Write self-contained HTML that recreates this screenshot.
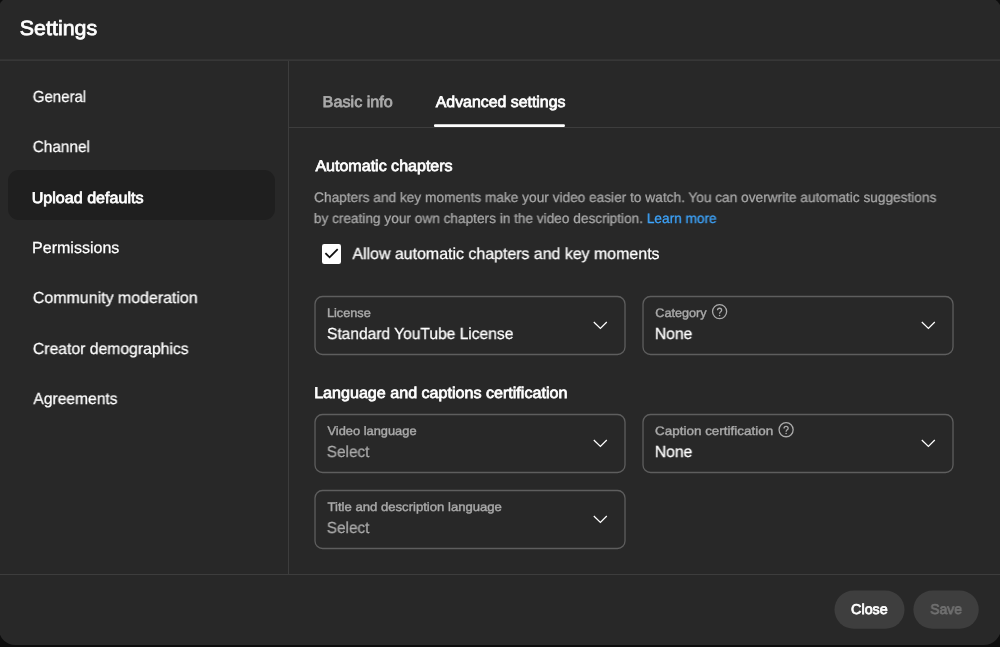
<!DOCTYPE html>
<html><head><meta charset="utf-8"><style>
html,body{margin:0;padding:0;width:1000px;height:647px;overflow:hidden;background:#0d0d0d;}
body{position:relative;font-family:"Liberation Sans",sans-serif;text-rendering:geometricPrecision;}
.dlg{position:absolute;left:-1.5px;top:-2.5px;width:1002.5px;height:647.7px;background:#282828;border-radius:10px 12px 17px 16px;}
.t{position:absolute;white-space:nowrap;line-height:1;transform-origin:0 0;will-change:transform;}
.lk{color:#3ea6ff;-webkit-text-stroke-color:#3ea6ff;}
.hl{position:absolute;left:0;top:0;width:1000px;height:1px;background:#3d3d3d;}
.sel{position:absolute;left:7.8px;top:170px;width:267.4px;height:50px;background:#1f1f1f;border-radius:11px;}
.box{position:absolute;width:310px;height:57px;border:1px solid #5a5a5a;border-radius:8px;}
.btn{position:absolute;top:590.2px;height:38px;border-radius:19px;background:#3e3e3e;}
svg{position:absolute;left:0;top:0;}
</style></head><body>
<div class="dlg"></div>

<div class="hl" style="top:574px"></div>
<div style="position:absolute;left:288px;top:61px;width:1px;height:513px;background:#3d3d3d"></div>
<div style="position:absolute;left:289px;top:127px;width:711px;height:1px;background:#3d3d3d"></div>

<div class="sel"></div>



<div style="position:absolute;left:321.9px;top:244.3px;width:19px;height:19.5px;background:#fff;border-radius:2.2px"></div>
<svg width="1000" height="647" viewBox="0 0 1000 647">
<line x1="0" y1="60.1" x2="1000" y2="60.1" stroke="#3d3d3d" stroke-width="1.1"/>
<polyline points="325.4,253.2 329.6,257.3 337.7,249.2" fill="none" stroke="#0f0f0f" stroke-width="1.8"/>
<rect x="434" y="124.3" width="130.9" height="2.75" rx="1" fill="#fff"/>
<rect x="834.5" y="590.5" width="70" height="38.3" rx="19.15" fill="#3e3e3e"/>
<rect x="913.4" y="590.5" width="65.35" height="38.3" rx="19.15" fill="#3e3e3e"/>
<path d="M322.5,296.5 H617.5 A7.5,7.5 0 0 1 625,304.0 V347.0 A7.5,7.5 0 0 1 617.5,354.5 H322.5 A7.5,7.5 0 0 1 315,347.0 V304.0 A7.5,7.5 0 0 1 322.5,296.5 Z" fill="none" stroke="#5e5e5e" stroke-width="1.3"/><path d="M650.5,296.5 H945.5 A7.5,7.5 0 0 1 953,304.0 V347.0 A7.5,7.5 0 0 1 945.5,354.5 H650.5 A7.5,7.5 0 0 1 643,347.0 V304.0 A7.5,7.5 0 0 1 650.5,296.5 Z" fill="none" stroke="#5e5e5e" stroke-width="1.3"/><path d="M322.5,414.5 H617.5 A7.5,7.5 0 0 1 625,422.0 V465.0 A7.5,7.5 0 0 1 617.5,472.5 H322.5 A7.5,7.5 0 0 1 315,465.0 V422.0 A7.5,7.5 0 0 1 322.5,414.5 Z" fill="none" stroke="#5e5e5e" stroke-width="1.3"/><path d="M650.5,414.5 H945.5 A7.5,7.5 0 0 1 953,422.0 V465.0 A7.5,7.5 0 0 1 945.5,472.5 H650.5 A7.5,7.5 0 0 1 643,465.0 V422.0 A7.5,7.5 0 0 1 650.5,414.5 Z" fill="none" stroke="#5e5e5e" stroke-width="1.3"/><path d="M322.5,490.5 H617.5 A7.5,7.5 0 0 1 625,498.0 V541.0 A7.5,7.5 0 0 1 617.5,548.5 H322.5 A7.5,7.5 0 0 1 315,541.0 V498.0 A7.5,7.5 0 0 1 322.5,490.5 Z" fill="none" stroke="#5e5e5e" stroke-width="1.3"/>
<polyline points="593.8,322.0 600.4,328.4 606.8,322.0" fill="none" stroke="#fff" stroke-width="1.25"/><polyline points="921.8,322.0 928.4,328.4 934.8,322.0" fill="none" stroke="#fff" stroke-width="1.25"/><polyline points="593.8,440.0 600.4,446.4 606.8,440.0" fill="none" stroke="#fff" stroke-width="1.25"/><polyline points="921.8,440.0 928.4,446.4 934.8,440.0" fill="none" stroke="#fff" stroke-width="1.25"/><polyline points="593.8,516.0 600.4,522.4 606.8,516.0" fill="none" stroke="#fff" stroke-width="1.25"/>
<circle cx="719.6" cy="311.6" r="7.05" fill="none" stroke="#aaaaaa" stroke-width="1.3"/><path d="M717.55,310.30 a2.05,2.05 0 1 1 4.1,0 c0,1.1 -0.9,1.3 -1.4,1.8 -0.5,0.5 -0.65,0.9 -0.65,1.6" fill="none" stroke="#aaaaaa" stroke-width="1.3"/><circle cx="719.6" cy="315.45" r="0.8" fill="#aaaaaa"/>
<circle cx="786.1" cy="429.7" r="7.05" fill="none" stroke="#aaaaaa" stroke-width="1.3"/><path d="M784.05,428.40 a2.05,2.05 0 1 1 4.1,0 c0,1.1 -0.9,1.3 -1.4,1.8 -0.5,0.5 -0.65,0.9 -0.65,1.6" fill="none" stroke="#aaaaaa" stroke-width="1.3"/><circle cx="786.1" cy="433.55" r="0.8" fill="#aaaaaa"/>
</svg>
<div class="t" style="left:19px;top:19px;font-size:20.6px;-webkit-text-stroke:0.75px #ffffff;color:#ffffff;transform:translate(0.858px,0.000px) scaleX(1.0381)">Settings</div><div class="t" style="left:32px;top:90px;font-size:16.0px;-webkit-text-stroke:0.25px #ffffff;color:#ffffff;transform:translate(0.762px,0.000px) scaleX(0.9392)">General</div><div class="t" style="left:32px;top:140px;font-size:16.0px;-webkit-text-stroke:0.25px #ffffff;color:#ffffff;transform:translate(0.773px,0.000px) scaleX(0.9576)">Channel</div><div class="t" style="left:31px;top:191px;font-size:15.6px;-webkit-text-stroke:0.75px #ffffff;color:#ffffff;transform:translate(0.673px,0.000px) scaleX(1.0320)">Upload defaults</div><div class="t" style="left:31px;top:241px;font-size:16.0px;-webkit-text-stroke:0.25px #ffffff;color:#ffffff;transform:translate(0.997px,0.000px) scaleX(1.0030)">Permissions</div><div class="t" style="left:32px;top:291px;font-size:16.0px;-webkit-text-stroke:0.25px #ffffff;color:#ffffff;transform:translate(0.841px,0.000px) scaleX(0.9967)">Community moderation</div><div class="t" style="left:32px;top:342px;font-size:16.0px;-webkit-text-stroke:0.25px #ffffff;color:#ffffff;transform:translate(0.875px,0.000px) scaleX(0.9840)">Creator demographics</div><div class="t" style="left:33px;top:392px;font-size:16.0px;-webkit-text-stroke:0.25px #ffffff;color:#ffffff;transform:translate(0.361px,0.000px) scaleX(0.9754)">Agreements</div><div class="t" style="left:322px;top:95px;font-size:15.6px;-webkit-text-stroke:0.75px #aaaaaa;color:#aaaaaa;transform:translate(0.606px,0.000px) scaleX(1.0392)">Basic info</div><div class="t" style="left:435px;top:95px;font-size:15.6px;-webkit-text-stroke:0.75px #ffffff;color:#ffffff;transform:translate(0.780px,0.000px) scaleX(1.0174)">Advanced settings</div><div class="t" style="left:315px;top:159px;font-size:15.6px;-webkit-text-stroke:0.75px #ffffff;color:#ffffff;transform:translate(0.378px,0.000px) scaleX(1.0282)">Automatic chapters</div><div class="t" style="left:314px;top:191px;font-size:13.8px;-webkit-text-stroke:0.25px #aaaaaa;color:#aaaaaa;transform:translate(0.060px,0.000px) scaleX(0.9908)">Chapters and key moments make your video easier to watch. You can overwrite automatic suggestions</div><div class="t" style="left:313px;top:212px;font-size:13.8px;-webkit-text-stroke:0.25px #aaaaaa;color:#aaaaaa;transform:translate(0.820px,0.000px) scaleX(0.9891)">by creating your own chapters in the video description. <span class=lk>Learn more</span></div><div class="t" style="left:352px;top:247px;font-size:16.0px;-webkit-text-stroke:0.25px #ffffff;color:#ffffff;transform:translate(0.431px,0.000px) scaleX(0.9952)">Allow automatic chapters and key moments</div><div class="t" style="left:326px;top:307px;font-size:12.3px;-webkit-text-stroke:0.4px #aaaaaa;color:#aaaaaa;transform:translate(0.876px,0.000px) scaleX(1.0374)">License</div><div class="t" style="left:326px;top:327px;font-size:16.0px;-webkit-text-stroke:0.25px #ffffff;color:#ffffff;transform:translate(0.960px,0.000px) scaleX(0.9727)">Standard YouTube License</div><div class="t" style="left:655px;top:307px;font-size:12.3px;-webkit-text-stroke:0.4px #aaaaaa;color:#aaaaaa;transform:translate(0.263px,0.000px) scaleX(1.0293)">Category</div><div class="t" style="left:654px;top:327px;font-size:16.0px;-webkit-text-stroke:0.25px #ffffff;color:#ffffff;transform:translate(0.815px,0.000px) scaleX(0.9822)">None</div><div class="t" style="left:314px;top:386px;font-size:15.6px;-webkit-text-stroke:0.75px #ffffff;color:#ffffff;transform:translate(0.149px,0.000px) scaleX(1.0321)">Language and captions certification</div><div class="t" style="left:327px;top:425px;font-size:12.3px;-webkit-text-stroke:0.4px #aaaaaa;color:#aaaaaa;transform:translate(0.516px,0.000px) scaleX(1.0444)">Video language</div><div class="t" style="left:326px;top:445px;font-size:16.0px;-webkit-text-stroke:0.25px #aaaaaa;color:#aaaaaa;transform:translate(0.748px,0.000px) scaleX(0.9586)">Select</div><div class="t" style="left:655px;top:425px;font-size:12.3px;-webkit-text-stroke:0.4px #aaaaaa;color:#aaaaaa;transform:translate(0.091px,0.000px) scaleX(1.0929)">Caption certification</div><div class="t" style="left:654px;top:445px;font-size:16.0px;-webkit-text-stroke:0.25px #ffffff;color:#ffffff;transform:translate(0.793px,0.000px) scaleX(0.9826)">None</div><div class="t" style="left:327px;top:501px;font-size:12.3px;-webkit-text-stroke:0.4px #aaaaaa;color:#aaaaaa;transform:translate(0.541px,0.000px) scaleX(1.0657)">Title and description language</div><div class="t" style="left:326px;top:521px;font-size:16.0px;-webkit-text-stroke:0.25px #aaaaaa;color:#aaaaaa;transform:translate(0.748px,0.000px) scaleX(0.9586)">Select</div><div class="t" style="left:851px;top:603px;font-size:14.2px;-webkit-text-stroke:0.75px #ffffff;color:#ffffff;transform:translate(0.117px,0.000px) scaleX(1.0092)">Close</div><div class="t" style="left:930px;top:603px;font-size:14.2px;-webkit-text-stroke:0.75px #717171;color:#717171;transform:translate(0.294px,0.000px) scaleX(0.9769)">Save</div>
</body></html>
